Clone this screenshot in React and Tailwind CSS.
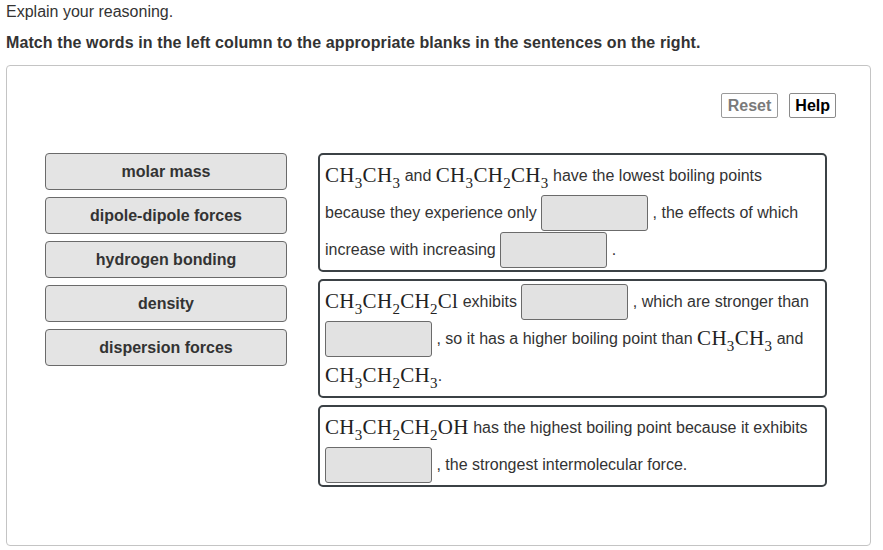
const WORDS = [
  "molar mass",
  "dipole-dipole forces",
  "hydrogen bonding",
  "density",
  "dispersion forces",
];

// chemical formula: digits become subscripts
function F({ f }) {
  const parts = f.split(/(\d)/).filter(Boolean);
  return (
    <span className="font-['Liberation_Serif','DejaVu_Serif',serif] text-[21px] tracking-[0.3px] text-[#222]">
      {parts.map((p, i) =>
        /\d/.test(p) ? (
          <sub key={i} className="text-[15px] align-[-2px] leading-none">
            {p}
          </sub>
        ) : (
          <span key={i}>{p}</span>
        )
      )}
    </span>
  );
}

function Blank() {
  return (
    <span className="inline-block h-[36px] w-[107px] shrink-0 rounded-[3px] border border-[#6b6b6b] bg-[#e2e2e2]" />
  );
}

function Line({ children }) {
  return (
    <div className="flex h-[37px] items-center whitespace-pre">{children}</div>
  );
}

function Box({ children }) {
  return (
    <div className="rounded-[5px] border-2 border-[#3b4145] px-[5px] py-[2px]">
      {children}
    </div>
  );
}

export default function App() {
  return (
    <div className="min-h-[550px] bg-white font-['Liberation_Sans',Arial,sans-serif] text-[16px] text-[#333]">
      <div className="px-[6px] pt-[3px]">
        <p className="text-[16px] leading-[18px]">Explain your reasoning.</p>
        <p className="mt-[13px] text-[16px] font-bold leading-[18px] tracking-[0.1px]">
          Match the words in the left column to the appropriate blanks in the
          sentences on the right.
        </p>
      </div>

      <div className="ml-[6px] mt-[13px] h-[481px] w-[865px] rounded-[4px] border border-[#c4c4c4] pl-[38px] pr-[34px] pt-[27px]">
        <div className="flex justify-end gap-[11px]">
          <button className="h-[25px] rounded-[2px] border border-[#9a9a9a] px-[6px] text-[16px] font-bold text-[#7a7a7a]">
            Reset
          </button>
          <button className="h-[25px] rounded-[2px] border border-[#8a8a8a] px-[5px] text-[16px] font-bold text-black">
            Help
          </button>
        </div>

        <div className="mt-[35px] flex gap-[31px]">
          <div className="flex w-[242px] shrink-0 flex-col gap-[7px]">
            {WORDS.map((w) => (
              <div
                key={w}
                className="flex h-[37px] items-center justify-center rounded-[4px] border-[1.5px] border-[#6a6a6a] bg-[#e4e4e4] font-bold text-[#333]"
              >
                {w}
              </div>
            ))}
          </div>

          <div className="flex w-[509px] flex-col gap-[7px]">
            <Box>
              <Line>
                <F f="CH3CH3" /> and <F f="CH3CH2CH3" /> have the lowest boiling
                points
              </Line>
              <Line>
                because they experience only <Blank /> , the effects of which
              </Line>
              <Line>
                increase with increasing <Blank /> .
              </Line>
            </Box>
            <Box>
              <Line>
                <F f="CH3CH2CH2Cl" /> exhibits <Blank /> , which are stronger
                than
              </Line>
              <Line>
                <Blank /> , so it has a higher boiling point than{" "}
                <F f="CH3CH3" /> and
              </Line>
              <Line>
                <F f="CH3CH2CH3" />.
              </Line>
            </Box>
            <Box>
              <Line>
                <F f="CH3CH2CH2OH" /> has the highest boiling point because it
                exhibits
              </Line>
              <Line>
                <Blank /> , the strongest intermolecular force.
              </Line>
            </Box>
          </div>
        </div>
      </div>
    </div>
  );
}
